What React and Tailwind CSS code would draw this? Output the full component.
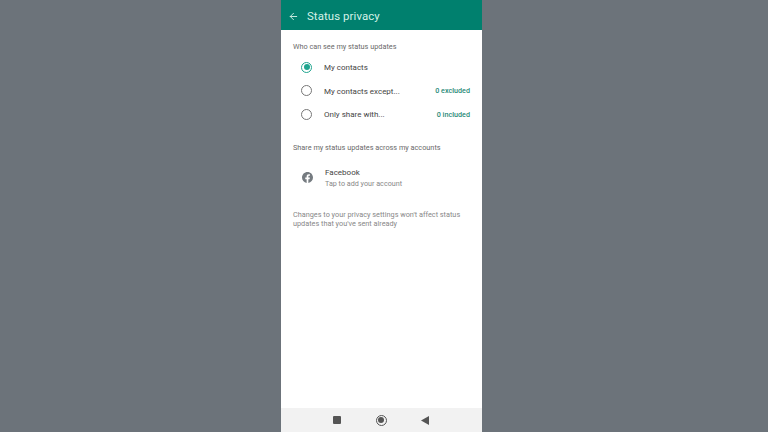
import React from "react";
import { ArrowLeft } from "lucide-react";

function Radio({ on }) {
  return (
    <div className={`w-[11px] h-[11px] rounded-full border flex items-center justify-center ${on ? "border-[#1fa58f] border-[1.5px]" : "border-[#777]"}`}>
      {on && <div className="w-[6px] h-[6px] rounded-full bg-[#1fa58f]" />}
    </div>
  );
}

function Row({ on, label, note }) {
  return (
    <div className="flex items-center h-[23.5px]">
      <div className="w-[31px] pl-[8px]"><Radio on={on} /></div>
      <div className="text-[8px] text-[#444] mt-[2px]">{label}</div>
      {note && <div className="ml-auto mt-[2px] text-[7.2px] font-medium text-[#2a8a78]">{note}</div>}
    </div>
  );
}

export default function App() {
  return (
    <div className="w-[768px] h-[432px] bg-[#6c737a] flex justify-center overflow-hidden" style={{ fontFamily: "Roboto, 'Liberation Sans', sans-serif" }}>
      <div className="w-[201px] ml-[-5px] h-full bg-white flex flex-col">
        <div className="h-[30px] bg-[#00806e] flex items-center pl-[7px] pt-[3px] text-[#d5f2e8]">
          <ArrowLeft size={11} strokeWidth={2} />
          <span className="ml-[8px] text-[11.4px] text-[#d5f2e8] tracking-[0.1px]">Status privacy</span>
        </div>
        <div className="flex-1 flex flex-col px-[12px]">
          <div className="mt-[12px] text-[7.3px] text-[#6a6a6a] leading-[9px]">Who can see my status updates</div>
          <div className="mt-[4.5px]">
            <Row on label="My contacts" />
            <Row label="My contacts except..." note="0 excluded" />
            <Row label="Only share with..." note="0 included" />
          </div>
          <div className="mt-[16.5px] text-[7.3px] text-[#6a6a6a] leading-[9px]">Share my status updates across my accounts</div>
          <div className="mt-[15.5px] flex items-center">
            <svg viewBox="0 0 24 24" className="w-[11px] h-[11px] ml-[9px]" fill="#757b80">
              <path d="M24 12.07C24 5.4 18.63 0 12 0S0 5.4 0 12.07c0 6.03 4.39 11.02 10.13 11.93v-8.44H7.08v-3.49h3.05V9.41c0-3.02 1.79-4.69 4.53-4.69 1.31 0 2.68.24 2.68.24v2.97h-1.51c-1.49 0-1.96.93-1.96 1.88v2.26h3.33l-.53 3.49h-2.8V24C19.61 23.09 24 18.1 24 12.07z" />
            </svg>
            <div className="ml-[12px]">
              <div className="text-[8px] text-[#444] leading-[11px]">Facebook</div>
              <div className="text-[7.2px] text-[#888] leading-[10px] mt-[0.5px]">Tap to add your account</div>
            </div>
          </div>
          <div className="mt-[21px] text-[7.3px] text-[#888] leading-[9.5px] w-[175px]">Changes to your privacy settings won't affect status updates that you've sent already</div>
        </div>
        <div className="h-[24px] bg-[#f2f2f2] flex items-center justify-center gap-[34.5px] pr-[1px]">
          <div className="w-[8px] h-[8px] rounded-[1px] bg-[#555]" />
          <div className="w-[11px] h-[11px] rounded-full border border-[#555] flex items-center justify-center">
            <div className="w-[6px] h-[6px] rounded-full bg-[#555]" />
          </div>
          <svg viewBox="0 0 8 9" className="w-[8px] h-[9px]" fill="#555"><path d="M8 0v9L0 4.5z" /></svg>
        </div>
      </div>
    </div>
  );
}
